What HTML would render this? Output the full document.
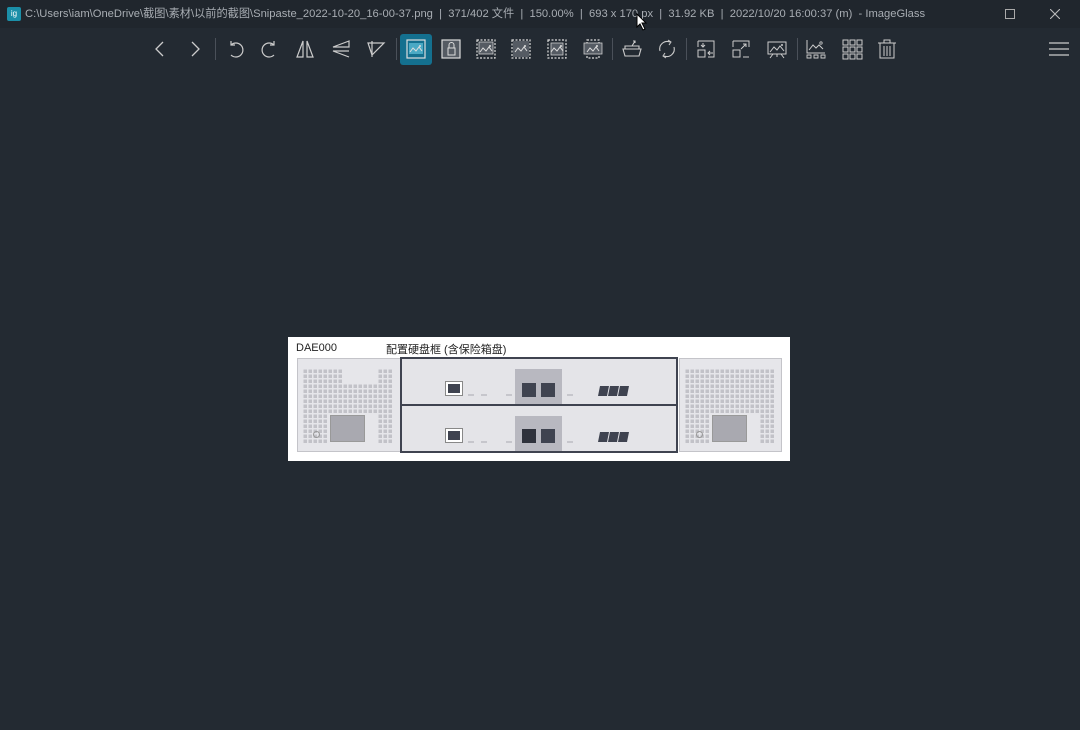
<!DOCTYPE html>
<html><head><meta charset="utf-8"><style>
*{margin:0;padding:0;box-sizing:border-box}
body{width:1080px;height:730px;background:#232a32;position:relative;overflow:hidden;font-family:"Liberation Sans","Noto Sans CJK SC",sans-serif}
.title{position:absolute;left:0;top:0;width:1080px;height:28px;background:#20262d;color:#a8adb3;font-size:11.2px;line-height:28px}
.title .t{position:absolute;left:25px;top:0;white-space:nowrap}
.logo{position:absolute;left:7px;top:7px;width:14px;height:14px;background:#1b8fa8;border-radius:2px;color:#fff;font-size:8px;line-height:14px;text-align:center}
.ab{position:absolute}
svg.i{position:absolute;top:37px;width:24px;height:24px}
.sep{position:absolute;top:38px;width:1px;height:22px;background:#4a5059}
.img{position:absolute;left:288px;top:337px;width:502px;height:124px;background:#fff}
.grid{position:absolute;background-image:linear-gradient(90deg,#e6e6ea 1.5px,transparent 1.5px),linear-gradient(#e6e6ea 1.5px,transparent 1.5px);background-size:5px 5px;background-color:#c2c2c8}
.p{position:absolute;background:#e6e6ea;border:1px solid #c4c4c9}
</style></head><body>
<div class="title"><div class="logo">ig</div><div class="t">C:\Users\iam\OneDrive\截图\素材\以前的截图\Snipaste_2022-10-20_16-00-37.png &nbsp;|&nbsp; 371/402 文件 &nbsp;|&nbsp; 150.00% &nbsp;|&nbsp; 693 x 170 px &nbsp;|&nbsp; 31.92 KB &nbsp;|&nbsp; 2022/10/20 16:00:37 (m) &nbsp;- ImageGlass</div>
<div class="ab" style="left:1005px;top:9px;width:10px;height:10px;border:1px solid #aaa"></div>
<svg class="ab" style="left:1050px;top:9px" width="10" height="10" viewBox="0 0 10 10"><path d="M0 0L10 10M10 0L0 10" stroke="#bbb" stroke-width="1.1"/></svg>
</div>
<svg width="0" height="0" style="position:absolute"><defs>
<g id="pic"><path d="M6 15 L9 11 L12 14 L15 10 L18 14" fill="none" stroke="#ddd" stroke-width="1"/><circle cx="16" cy="9" r="1" fill="#ddd"/></g>
</defs></svg>
<div class="ab" style="left:400px;top:34px;width:32px;height:31px;background:#14708f;border-radius:3px"></div>
<svg class="i" style="left:148px" viewBox="0 0 24 24"><path d="M15 5 L8 12 L15 19" fill="none" stroke="#ccc" stroke-width="1.3"/></svg>
<svg class="i" style="left:183px" viewBox="0 0 24 24"><path d="M9 5 L16 12 L9 19" fill="none" stroke="#ccc" stroke-width="1.3"/></svg>
<div class="sep" style="left:215px"></div>
<svg class="i" style="left:223px" viewBox="0 0 24 24"><path d="M8 8 A7 7 0 1 1 8 18" fill="none" stroke="#ccc" stroke-width="1.2"/><path d="M8 4 L8 8 L12 8" fill="none" stroke="#ccc" stroke-width="1.2"/></svg>
<svg class="i" style="left:258px" viewBox="0 0 24 24"><path d="M16 8 A7 7 0 1 0 16 18" fill="none" stroke="#ccc" stroke-width="1.2"/><path d="M16 4 L16 8 L12 8" fill="none" stroke="#ccc" stroke-width="1.2"/></svg>
<svg class="i" style="left:293px" viewBox="0 0 24 24"><path d="M10 4 L4 20 L10 20 Z M14 4 L20 20 L14 20 Z" fill="none" stroke="#ccc" stroke-width="1.2"/></svg>
<svg class="i" style="left:329px" viewBox="0 0 24 24"><path d="M20 4 L4 10 L20 10 Z M20 14 L4 14 L20 20" fill="none" stroke="#ccc" stroke-width="1.2"/></svg>
<svg class="i" style="left:364px" viewBox="0 0 24 24"><path d="M4 6 L20 6 L8 18 Z M8 4 L8 20" fill="none" stroke="#ccc" stroke-width="1.2"/></svg>
<div class="sep" style="left:396px"></div>
<svg class="i" style="left:404px" viewBox="0 0 24 24"><rect x="3" y="3" width="18" height="18" fill="none" stroke="#ddd" stroke-width="1.2"/><rect x="5" y="6" width="14" height="11" fill="#4aa9c4"/><use href="#pic"/></svg>
<svg class="i" style="left:439px" viewBox="0 0 24 24"><rect x="3" y="3" width="18" height="18" fill="#555b63" stroke="#ddd" stroke-width="1.2"/><rect x="9" y="11" width="7" height="7" fill="none" stroke="#ddd"/><path d="M10 11 V8 A2.5 2.5 0 0 1 15 8 V11" fill="none" stroke="#ddd"/></svg>
<svg class="i" style="left:474px" viewBox="0 0 24 24"><rect x="3" y="3" width="18" height="18" fill="none" stroke="#ddd" stroke-width="1.2" stroke-dasharray="2 1.5"/><rect x="5" y="5" width="14" height="12" fill="#555b63" stroke="#ccc" stroke-width=".8"/><use href="#pic"/></svg>
<svg class="i" style="left:509px" viewBox="0 0 24 24"><rect x="3" y="3" width="18" height="18" fill="none" stroke="#ddd" stroke-width="1.2" stroke-dasharray="2 1.5"/><rect x="4" y="4" width="16" height="16" fill="#555b63"/><use href="#pic"/></svg>
<svg class="i" style="left:545px" viewBox="0 0 24 24"><rect x="3" y="3" width="18" height="18" fill="none" stroke="#ddd" stroke-width="1.2" stroke-dasharray="2 1.5"/><rect x="6" y="6" width="12" height="12" fill="#555b63" stroke="#ccc" stroke-width=".8"/><use href="#pic"/></svg>
<svg class="i" style="left:581px" viewBox="0 0 24 24"><rect x="6" y="3" width="12" height="18" fill="none" stroke="#ddd" stroke-width="1.2" stroke-dasharray="2 1.5"/><rect x="3" y="6" width="18" height="11" fill="#555b63" stroke="#ccc" stroke-width=".8"/><use href="#pic"/></svg>
<div class="sep" style="left:612px"></div>
<svg class="i" style="left:620px" viewBox="0 0 24 24"><path d="M3 12 H21 L19 19 H5 Z M5 12 V9 H19 V12 M12 9 L15 4 M13 4 H15 V6" fill="none" stroke="#ccc" stroke-width="1.1"/></svg>
<svg class="i" style="left:655px" viewBox="0 0 24 24"><path d="M5 14 A7.5 7.5 0 0 1 15 5 M19 10 A7.5 7.5 0 0 1 9 19" fill="none" stroke="#ccc" stroke-width="1.1"/><path d="M13 3 L16 5 L14 8 M11 21 L8 19 L10 16" fill="none" stroke="#ccc"/></svg>
<div class="sep" style="left:686px"></div>
<svg class="i" style="left:694px" viewBox="0 0 24 24"><path d="M4 4 H20 V20 H14 M4 4 V10 M4 13 H11 V20 H4 Z M9 6 V10 M7 8 L9 10 L11 8 M19 16 H14 M16 14 L14 16 L16 18" fill="none" stroke="#ccc" stroke-width="1"/></svg>
<svg class="i" style="left:729px" viewBox="0 0 24 24"><path d="M4 4 H20 V10 M4 4 V10 M4 13 H11 V20 H4 Z M14 20 H20 M12 12 L17 7 M14 7 H17 V10" fill="none" stroke="#ccc" stroke-width="1"/></svg>
<svg class="i" style="left:765px" viewBox="0 0 24 24"><path d="M3 5 H21 V17 H3 Z M5 15 L9 10 L12 13 L15 9 L19 14 M8 17 L5 21 M16 17 L19 21 M12 17 V20" fill="none" stroke="#ccc" stroke-width="1"/><circle cx="17" cy="8" r="1" fill="#ccc"/></svg>
<div class="sep" style="left:797px"></div>
<svg class="i" style="left:804px" viewBox="0 0 24 24"><path d="M3 3 V16 H21 M5 13 L9 8 L12 11 L15 8 L19 12" fill="none" stroke="#ccc" stroke-width="1"/><circle cx="17" cy="6" r="1.2" fill="none" stroke="#ccc" stroke-width=".8"/><path d="M3 18 h4 v3 h-4z M10 18 h4 v3 h-4z M17 18 h4 v3 h-4z" fill="none" stroke="#ccc" stroke-width=".9"/></svg>
<svg class="i" style="left:840px" viewBox="0 0 24 24"><path d="M3 3h5v5h-5z M10 3h5v5h-5z M17 3h5v5h-5z M3 10h5v5h-5z M10 10h5v5h-5z M17 10h5v5h-5z M3 17h5v5h-5z M10 17h5v5h-5z M17 17h5v5h-5z" fill="none" stroke="#ccc" stroke-width="1"/></svg>
<svg class="i" style="left:875px" viewBox="0 0 24 24"><path d="M3 6 H21 M9 6 V3 H15 V6 M5 6 V21 H19 V6 M9 9 V19 M12 9 V19 M15 9 V19" fill="none" stroke="#ccc" stroke-width="1"/></svg>
<svg class="i" style="left:1047px" viewBox="0 0 24 24"><path d="M2 6 H22 M2 12 H22 M2 18 H22" stroke="#ccc" stroke-width="1.2"/></svg>
<svg class="ab" style="left:636px;top:13px" width="12" height="18" viewBox="0 0 12 18"><path d="M1 1 L1 14 L4 11 L7 17 L9 16 L6 10 L10 10 Z" fill="#fff" stroke="#000" stroke-width="1"/></svg>

<div class="img">
<div class="ab" style="left:8px;top:5px;font-size:11px;color:#222">DAE000</div>
<div class="ab" style="left:98px;top:4px;font-size:11px;color:#222">配置硬盘框 (含保险箱盘)</div>
<div class="p" style="left:9px;top:21px;width:104px;height:94px"></div>
<div class="grid" style="left:14px;top:31px;width:40px;height:45px"></div>
<div class="grid" style="left:54px;top:46px;width:40px;height:30px"></div>
<div class="grid" style="left:14px;top:76px;width:25px;height:30px"></div>
<div class="grid" style="left:89px;top:31px;width:15px;height:75px"></div>
<div class="ab" style="left:42px;top:78px;width:35px;height:27px;background:#a9a9b0;border:1px solid #999"></div>
<div class="ab" style="left:25px;top:94px;width:7px;height:7px;border:1px solid #999;border-radius:50%"></div>
<div class="p" style="left:391px;top:21px;width:103px;height:94px"></div>
<div class="grid" style="left:396px;top:31px;width:90px;height:45px"></div>
<div class="grid" style="left:396px;top:76px;width:25px;height:30px"></div>
<div class="grid" style="left:471px;top:76px;width:16px;height:30px"></div>
<div class="ab" style="left:424px;top:78px;width:35px;height:27px;background:#a9a9b0;border:1px solid #999"></div>
<div class="ab" style="left:408px;top:94px;width:7px;height:7px;border:1px solid #999;border-radius:50%"></div>
<div class="ab" style="left:112px;top:20px;width:278px;height:96px;border:2px solid #3f4350;background:#e4e4e8"></div>
<div class="ab" style="left:112px;top:67px;width:278px;height:2px;background:#3f4350"></div>
<div class="ab" style="left:227px;top:32px;width:47px;height:35px;background:#b8b8c0"></div>
<div class="ab" style="left:234px;top:46px;width:14px;height:14px;background:#3f4350"></div>
<div class="ab" style="left:253px;top:46px;width:14px;height:14px;background:#3f4350"></div>
<div class="ab" style="left:157px;top:44px;width:18px;height:15px;border:1px solid #888;background:#fff;padding:2px"><div style="width:100%;height:100%;background:#3f4350"></div></div>
<div class="ab" style="left:227px;top:79px;width:47px;height:35px;background:#b8b8c0"></div>
<div class="ab" style="left:234px;top:92px;width:14px;height:14px;background:#2f323c"></div>
<div class="ab" style="left:253px;top:92px;width:14px;height:14px;background:#3f4350"></div>
<div class="ab" style="left:157px;top:91px;width:18px;height:15px;border:1px solid #888;background:#fff;padding:2px"><div style="width:100%;height:100%;background:#3f4350"></div></div>
<svg class="ab" style="left:175px;top:40px" width="180" height="75" viewBox="0 0 180 75">
<g fill="#c6c6cc"><rect x="5" y="17" width="6" height="2"/><rect x="18" y="17" width="6" height="2"/><rect x="43" y="17" width="6" height="2"/><rect x="104" y="17" width="6" height="2"/>
<rect x="5" y="64" width="6" height="2"/><rect x="18" y="64" width="6" height="2"/><rect x="43" y="64" width="6" height="2"/><rect x="104" y="64" width="6" height="2"/></g>
<g fill="#3f4350"><path d="M137 9h9l-2 10h-9z M147 9h9l-2 10h-9z M157 9h9l-2 10h-9z"/>
<path d="M137 55h9l-2 10h-9z M147 55h9l-2 10h-9z M157 55h9l-2 10h-9z"/></g>
</svg>
</div>
</body></html>
